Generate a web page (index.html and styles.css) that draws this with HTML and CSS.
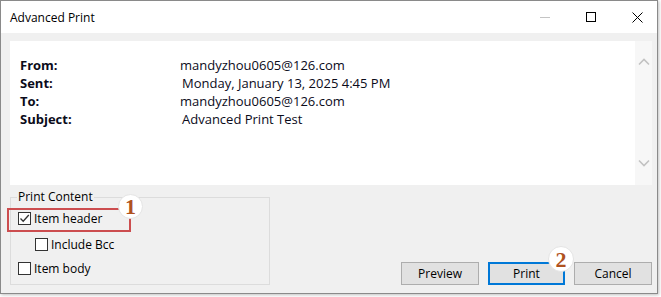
FILE: index.html
```html
<!DOCTYPE html>
<html>
<head>
<meta charset="utf-8">
<link rel="stylesheet" href="styles.css">
</head>
<body>
<div class="window">
  <div class="titlebar">
    <span class="title">Advanced Print</span>
    <div class="controls">
      <span class="ctl min"><svg width="10" height="10" viewBox="0 0 10 10"><path d="M0 5.5H10" stroke="#c4c4c4" stroke-width="1"/></svg></span>
      <span class="ctl max"><svg width="10" height="10" viewBox="0 0 10 10"><rect x="0.5" y="0.5" width="9" height="9" fill="none" stroke="#000" stroke-width="1"/></svg></span>
      <span class="ctl close"><svg width="11" height="11" viewBox="0 0 11 11"><path d="M0.5 0.5L10.5 10.5M10.5 0.5L0.5 10.5" stroke="#000" stroke-width="1"/></svg></span>
    </div>
  </div>
  <div class="body">
    <div class="preview">
      <div class="headers">
        <div class="row"><span class="label">From:</span><span class="value">mandyzhou0605@126.com</span></div>
        <div class="row"><span class="label">Sent:</span><span class="value shift">Monday, January 13, 2025 4:45 PM</span></div>
        <div class="row"><span class="label">To:</span><span class="value">mandyzhou0605@126.com</span></div>
        <div class="row"><span class="label">Subject:</span><span class="value shift">Advanced Print Test</span></div>
      </div>
      <div class="scrollbar">
        <svg width="12" height="8" viewBox="0 0 12 8"><path d="M1 6.5L6 1.5L11 6.5" fill="none" stroke="#c2c2c2" stroke-width="1.6"/></svg>
        <svg width="12" height="8" viewBox="0 0 12 8"><path d="M1 1.5L6 6.5L11 1.5" fill="none" stroke="#c2c2c2" stroke-width="1.6"/></svg>
      </div>
    </div>
    <div class="bottom">
      <div class="group">
        <span class="legend">Print Content</span>
        <label class="check first"><span class="box checked"><svg width="11" height="11" viewBox="0 0 11 11"><path d="M1.5 5.5L4.2 8.3L9.8 2" fill="none" stroke="#333" stroke-width="1.3"/></svg></span>Item header</label>
        <label class="check indent"><span class="box"></span>Include Bcc</label>
        <label class="check last"><span class="box"></span>Item body</label>
        <span class="highlight"></span>
        <span class="badge badge1">1</span>
      </div>
      <div class="buttons">
        <button class="btn">Preview</button>
        <button class="btn default">Print<span class="badge badge2">2</span></button>
        <button class="btn">Cancel</button>
      </div>
    </div>
  </div>
</div>
</body>
</html>
```
FILE: styles.css
```css
* { box-sizing: border-box; }
html, body { margin: 0; padding: 0; background: #ffffff; }
body { width: 661px; height: 297px; overflow: hidden; font-family: "Open Sans", "Noto Sans", sans-serif; }

.window {
  width: 658px;
  height: 294px;
  border: 1px solid #8a8a8a;
  background: #f0f0f0;
  display: flex;
  flex-direction: column;
  box-shadow: 1px 1px 3px rgba(0,0,0,0.25);
  overflow: hidden;
}

.titlebar {
  height: 32px;
  background: #ffffff;
  display: flex;
  align-items: center;
  justify-content: space-between;
  padding-left: 9px;
  flex-shrink: 0;
}
.title { font-size: 12px; color: #000; }
.controls { display: flex; height: 100%; margin-right: -3px; }
.ctl { width: 46px; height: 100%; display: flex; align-items: center; justify-content: center; }
.ctl svg { display: block; }

.body {
  flex: 1;
  padding: 8px 5px 0 9px;
  display: flex;
  flex-direction: column;
}

.preview {
  height: 144px;
  background: #fff;
  display: flex;
  flex-shrink: 0;
}
.headers { flex: 1; padding: 15px 0 0 10px; }
.row { display: flex; height: 18px; align-items: center; font-size: 13px; color: #0b0b1a; }
.label { width: 160px; font-weight: 700; }
.value.shift { margin-left: 2px; }
.scrollbar {
  width: 17px;
  background: #f7f7f7;
  display: flex;
  flex-direction: column;
  justify-content: space-between;
  align-items: center;
  padding: 17px 0 18px;
}

.bottom {
  flex: 1;
  display: flex;
  justify-content: space-between;
  padding-top: 12px;
  padding-bottom: 8px;
}

.group {
  position: relative;
  width: 260px;
  height: 88px;
  border: 1px solid #dcdcdc;
  padding-left: 7px;
  display: flex;
  flex-direction: column;
  flex-shrink: 0;
}
.legend {
  align-self: flex-start;
  margin-top: -8px;
  margin-left: -1px;
  padding: 0 1px;
  background: #f0f0f0;
  font-size: 12px;
  line-height: 14px;
  color: #000;
}
.check {
  display: flex;
  align-items: center;
  font-size: 12px;
  height: 16px;
  color: #000;
}
.check.first { margin-top: 6px; }
.check.indent { margin-top: 10px; padding-left: 17px; }
.check.last { margin-top: 8px; }
.box {
  width: 13px;
  height: 13px;
  border: 1px solid #333;
  background: #fff;
  margin-right: 3px;
  display: flex;
  align-items: center;
  justify-content: center;
  flex-shrink: 0;
}

.highlight {
  position: absolute;
  left: -4px;
  top: 10px;
  width: 124px;
  height: 24px;
  border: 2px solid #cc4d4f;
  pointer-events: none;
}

.badge {
  position: absolute;
  width: 25px;
  height: 25px;
  border-radius: 50%;
  background: #fff;
  border: 1px solid #e4e4e4;
  color: #b0521e;
  font-family: "Liberation Serif", serif;
  font-weight: 700;
  font-size: 22px;
  line-height: 23px;
  text-align: center;
}
.badge1 { left: 107px; top: -4px; }
.badge2 { left: 58px; top: -18px; width: 26px; height: 26px; line-height: 25px; }

.buttons {
  display: flex;
  gap: 9px;
  align-self: flex-end;
  flex-shrink: 0;
}
.btn {
  position: relative;
  flex-shrink: 0;
  width: 78px;
  height: 23px;
  background: #e1e1e1;
  border: 1px solid #adadad;
  font-family: "Open Sans", "Noto Sans", sans-serif;
  font-size: 12px;
  color: #000;
  padding: 0;
}
.btn.default { width: 77px; border: 2px solid #0078d7; }
```
